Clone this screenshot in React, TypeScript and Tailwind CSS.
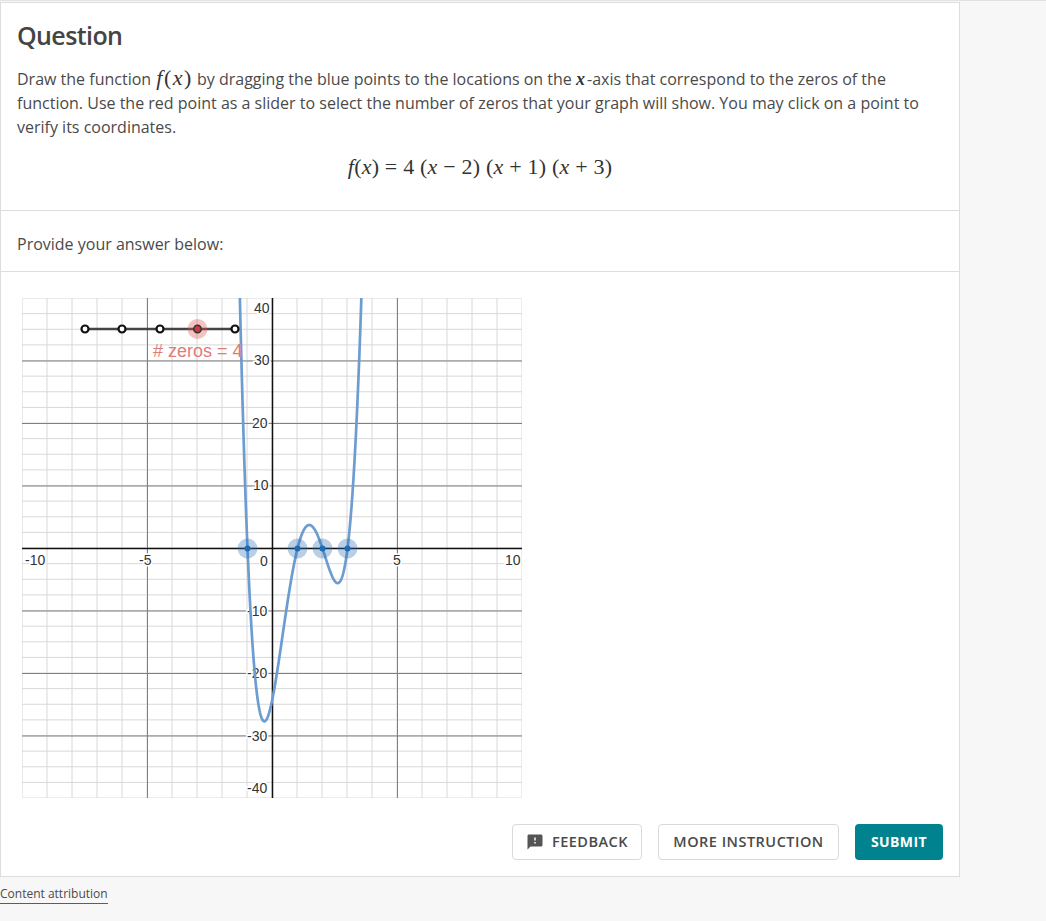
import { MdFeedback } from "react-icons/md";

const toX = (x: number) => 250.5 + 25 * x;
const toY = (y: number) => 250.5 - 6.25 * y;

// the drawn curve has four zeros: -1, 1, 2, 3
const f = (x: number) => 4 * (x + 1) * (x - 1) * (x - 2) * (x - 3);

const curve = () => {
  const pts: string[] = [];
  for (let x = -1.4; x <= 3.7; x += 0.02) {
    pts.push(`${toX(x).toFixed(2)},${toY(f(x)).toFixed(2)}`);
  }
  return pts.join(" ");
};

const minorX = Array.from({ length: 21 }, (_, i) => i * 25);
const minorY = Array.from({ length: 33 }, (_, i) => i * 15.625);
const majorY = [10, 20, 30, -10, -20, -30];
const yLabels = [
  { t: "40", x: 232, y: 15 },
  { t: "30", x: 232, y: 67 },
  { t: "20", x: 230, y: 130 },
  { t: "10", x: 231, y: 192 },
  { t: "-10", x: 225, y: 318 },
  { t: "-20", x: 225, y: 380 },
  { t: "-30", x: 225, y: 443 },
  { t: "-40", x: 225, y: 495 },
];
const xLabels = [
  { t: "-10", x: 3, y: 267 },
  { t: "-5", x: 117, y: 267 },
  { t: "0", x: 238, y: 268 },
  { t: "5", x: 371, y: 267 },
  { t: "10", x: 483, y: 267 },
];

const Graph = () => (
  <svg width="500" height="500" viewBox="0 0 500 500" className="block">
    <rect width="500" height="500" fill="#fff" />
    {minorX.map((x) => (
      <line key={x} x1={x} x2={x} y1={0} y2={500} stroke="#d8d8d8" strokeWidth="1" />
    ))}
    {minorY.map((y) => (
      <line key={y} x1={0} x2={500} y1={y} y2={y} stroke="#d8d8d8" strokeWidth="1" />
    ))}
    {majorY.map((v) => (
      <line key={v} x1={0} x2={500} y1={toY(v)} y2={toY(v)} stroke="#808080" strokeWidth="1" />
    ))}
    <line x1={125.5} x2={125.5} y1={0} y2={500} stroke="#808080" strokeWidth="1" />
    <line x1={375.5} x2={375.5} y1={0} y2={500} stroke="#808080" strokeWidth="1" />
    <line x1={0} x2={500} y1={250.5} y2={250.5} stroke="#111" strokeWidth="1.5" />
    <line x1={250.5} x2={250.5} y1={0} y2={500} stroke="#111" strokeWidth="1.5" />
    <g fontFamily="'Liberation Sans', Arial, sans-serif" fontSize="14" fill="#333">
      {yLabels.concat(xLabels).map((l) => (
        <text key={l.t} x={l.x} y={l.y} stroke="#fff" strokeWidth="3" paintOrder="stroke">
          {l.t}
        </text>
      ))}
    </g>

    <polyline points={curve()} fill="none" stroke="#6c9cd0" strokeWidth="2.7" />

    {[-1, 1, 2, 3].map((x) => (
      <g key={x}>
        <circle cx={toX(x)} cy={250.5} r="10" fill="#2a6db5" fillOpacity="0.33" />
        <circle cx={toX(x)} cy={250.5} r="3" fill="#1f6bb5" />
      </g>
    ))}

    <line x1={63} x2={213} y1={31} y2={31} stroke="#444" strokeWidth="2.5" />
    {[63, 100, 138, 213].map((x) => (
      <circle key={x} cx={x} cy={31} r="3.5" fill="#fff" stroke="#111" strokeWidth="2.2" />
    ))}
    <circle cx={175.5} cy={31} r="10" fill="#d9534f" fillOpacity="0.35" />
    <circle cx={175.5} cy={31} r="3.7" fill="#cc3a3a" stroke="#333" strokeWidth="1.5" />
    <text
      x={131}
      y={59}
      fontFamily="'Liberation Sans', Arial, sans-serif"
      fontSize="18"
      fill="#e07b7b"
    >
      # zeros = 4
    </text>
  </svg>
);

export default function App() {
  return (
    <div className="min-h-screen border-t border-[#e2e2e2] bg-[#f7f7f7] pt-px font-['Open_Sans',sans-serif] text-[#4a4a4a]">
      <div className="w-[960px] border border-[#dddddd] bg-white">
        <section className="border-b border-[#dddddd] px-4 pt-4 pb-[31px]">
          <h1 className="text-[25px] leading-8 font-[560] tracking-[-0.6px] text-[#444]">Question</h1>
          <p className="mt-4 text-base leading-6">
            Draw the function{" "}
            <span className="ml-px font-['Liberation_Serif',serif] text-[22px] leading-[0] tracking-[1.5px] text-[#333]">
              <i>f</i>(<i>x</i>)
            </span>{" "}
            by dragging the blue points to the locations on the{" "}
            <span className="mr-px font-['Liberation_Serif',serif] text-[18px] leading-[0] font-bold tracking-[1px] text-[#333] italic">
              x
            </span>
            -axis that correspond to the zeros of the function. Use the red point as a slider to select the number of
            zeros that your graph will show. You may click on a point to verify its coordinates.
          </p>
          <div className="mt-4 text-center font-['Liberation_Serif',serif] text-[22px] leading-6 tracking-[0.2px] text-[#333]">
            <i>f</i>(<i>x</i>) = 4 (<i>x</i> − 2) (<i>x</i> + 1) (<i>x</i> + 3)
          </div>
        </section>

        <section className="border-b border-[#dddddd] px-4 pt-[21px] pb-[15px]">
          <p className="text-base leading-6">Provide your answer below:</p>
        </section>

        <section className="pt-[26px] pr-4 pb-4 pl-[21px]">
          <Graph />
          <div className="mt-[26px] flex justify-end gap-4 text-[14.5px] font-semibold tracking-[0.5px]">
            <button className="flex h-9 w-[130px] items-center justify-center gap-2 rounded border border-[#d9d9d9] bg-white">
              <MdFeedback className="size-[18px] text-[#555]" />
              FEEDBACK
            </button>
            <button className="h-9 w-[181px] rounded border border-[#d9d9d9] bg-white">MORE INSTRUCTION</button>
            <button className="h-9 w-[88px] rounded bg-[#00838f] text-sm font-bold tracking-[0.4px] text-white">
              SUBMIT
            </button>
          </div>
        </section>
      </div>
      <div className="mt-[9px] text-xs leading-4 font-medium">
        <a className="inline-block border-b border-[#00838f] pb-px">Content attribution</a>
      </div>
    </div>
  );
}
